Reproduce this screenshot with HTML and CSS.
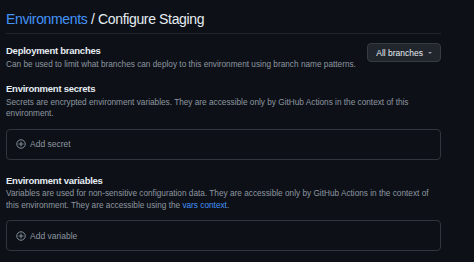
FILE: index.html
```html
<!DOCTYPE html>
<html lang="en">
  <head>
    <meta charset="UTF-8" />
    <title>Configure Staging</title>
    <link rel="stylesheet" href="styles.css">
  </head>
  <body>
    <div class="page">
      <h1 class="title"><a href="#">Environments</a> / Configure Staging</h1>

      <div class="section section-row">
        <div>
          <h2>Deployment branches</h2>
          <p>Can be used to limit what branches can deploy to this environment using branch name patterns.</p>
        </div>
        <button class="select-btn">All branches <span class="caret"></span></button>
      </div>

      <div class="section">
        <h2>Environment secrets</h2>
        <p>Secrets are encrypted environment variables. They are accessible only by GitHub Actions in the context of this environment.</p>
        <div class="add-box">
          <svg class="plus" viewBox="0 0 16 16" width="10" height="10">
            <circle cx="8" cy="8" r="6.75" fill="none" stroke="currentColor" stroke-width="1.5" />
            <path d="M8 4.75v6.5M4.75 8h6.5" stroke="currentColor" stroke-width="1.5" stroke-linecap="round" />
          </svg>
          Add secret
        </div>
      </div>

      <div class="section">
        <h2>Environment variables</h2>
        <p>Variables are used for non-sensitive configuration data. They are accessible only by GitHub Actions in the context of this environment. They are accessible using the <a href="#">vars context</a>.</p>
        <div class="add-box">
          <svg class="plus" viewBox="0 0 16 16" width="10" height="10">
            <circle cx="8" cy="8" r="6.75" fill="none" stroke="currentColor" stroke-width="1.5" />
            <path d="M8 4.75v6.5M4.75 8h6.5" stroke="currentColor" stroke-width="1.5" stroke-linecap="round" />
          </svg>
          Add variable
        </div>
      </div>
    </div>
  </body>
</html>
```

FILE: styles.css
```css
* {
  margin: 0;
  padding: 0;
  box-sizing: border-box;
  font-family: "Liberation Sans", Arial, sans-serif;
}
body {
  background-color: #0d1117;
  color: #e6edf3;
}
a {
  color: #4493f8;
  text-decoration: none;
}
.page {
  width: 435px;
  margin-left: 6px;
  padding-top: 9px;
}
.title {
  font-size: 14px;
  font-weight: normal;
  letter-spacing: -0.35px;
  line-height: 20px;
  padding-bottom: 4px;
  border-bottom: 1px solid #21262d;
  margin-bottom: 10px;
}
.section {
  margin-bottom: 14px;
}
.section-row {
  display: flex;
  justify-content: space-between;
  align-items: flex-start;
  margin-bottom: 12px;
}
h2 {
  font-size: 9.5px;
  font-weight: bold;
  letter-spacing: -0.25px;
  line-height: 13px;
  margin-bottom: 1.5px;
}
p {
  max-width: 428px;
  font-size: 8.25px;
  line-height: 11.5px;
  color: #8d96a0;
}
.select-btn {
  margin-top: -1px;
  height: 19px;
  padding: 0 8px;
  background: #21262d;
  border: 1px solid #363b42;
  border-radius: 4px;
  color: #e6edf3;
  font-size: 8.5px;
  display: flex;
  align-items: center;
  gap: 5px;
}
.caret {
  width: 0;
  height: 0;
  border-left: 2.5px solid transparent;
  border-right: 2.5px solid transparent;
  border-top: 2.5px solid #8d96a0;
}
.add-box {
  margin-top: 9px;
  height: 31px;
  border: 1px solid #30363d;
  border-radius: 4px;
  display: flex;
  align-items: center;
  gap: 4px;
  padding-left: 9px;
  font-size: 8.5px;
  color: #8d96a0;
}
.plus {
  color: #8d96a0;
}
```
